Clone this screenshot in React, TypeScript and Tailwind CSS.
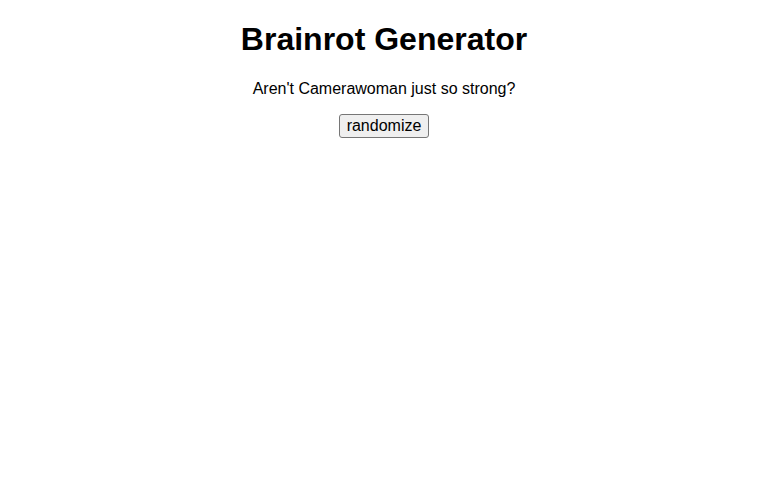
import React, { useState } from 'react';

const names = ['Camerawoman', 'Skibidi', 'Sigma', 'Rizzler'];

const App: React.FC = () => {
    const [name, setName] = useState('Camerawoman');

    return (
        <div className="min-h-screen bg-white text-black text-center font-['Liberation_Sans',Arial,sans-serif]">
            <h1 className="pt-[21px] mb-[22px] text-[32px] font-bold leading-[37px]">Brainrot Generator</h1>
            <p className="text-base leading-[18px] mb-4">Aren't {name} just so strong?</p>
            <button
                onClick={() => setName(names[Math.floor(Math.random() * names.length)])}
                className="bg-[#efefef] border border-[#767676] rounded-[3px] px-[7px] py-[2px] text-base leading-[18px] hover:bg-[#e5e5e5]"
            >
                randomize
            </button>
        </div>
    );
};

export default App;
